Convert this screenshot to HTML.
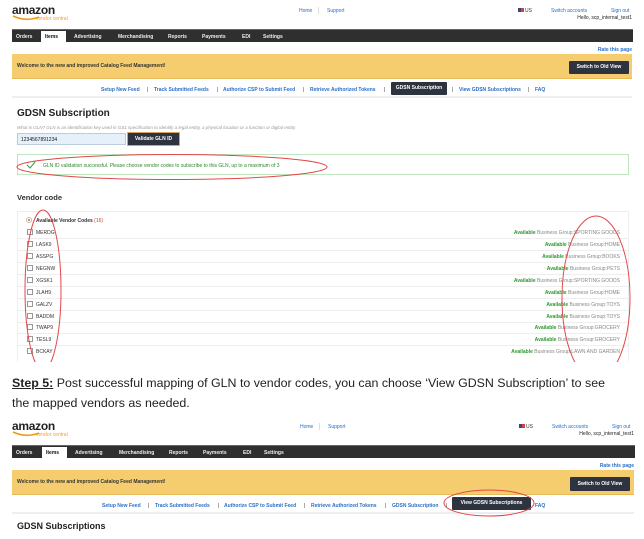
<!DOCTYPE html>
<html><head><meta charset="utf-8">
<style>
*{margin:0;padding:0;box-sizing:border-box}
body{width:644px;height:539px;background:#fff;position:relative;overflow:hidden;font-family:"Liberation Sans",sans-serif;color:#111}
.a{position:absolute;white-space:nowrap}
.hd{position:absolute;left:0;width:644px;height:120px}
.lnk{color:#2a6fc9;font-size:5px}
.nav{position:absolute;left:12px;top:29px;width:621px;height:13px;background:#2f2f2f;border-top:1px solid #666}
.nav span{position:absolute;top:4px;color:#eee;font-size:5px;font-weight:bold}
.tab{position:absolute;left:29px;top:1px;width:25px;height:12px;background:#fff}
.ban{position:absolute;left:12px;top:54px;width:620px;height:25px;background:#f6cd6e;border-bottom:1px solid #e6b95a}
.btn{position:absolute;background:#2d3440;color:#fff;font-size:5px;font-weight:bold;text-align:center;border-radius:1px}
.sub{position:absolute;top:87px;font-size:5px;font-weight:bold;color:#2a6fc9}
.bar{position:absolute;top:87px;font-size:5px;color:#333}
.row{position:absolute;left:17px;width:612px;height:12px;border-bottom:1px solid #eee;font-size:5px}
.cb{position:absolute;left:10px;top:2px;width:6px;height:6px;border:1px solid #999;background:#fff}
.code{position:absolute;left:19px;top:3px;color:#333}
.rt{position:absolute;right:9px;top:3px;color:#888}
.rt b{color:#2c9a2c}
</style></head><body>

<div class="hd" style="top:0">
 <div class="a" style="left:12px;top:3px;font-size:12px;font-weight:bold;color:#222;letter-spacing:-0.3px">amazon</div>
 <div class="a" style="left:36px;top:16px;font-size:5px;color:#f0a030">vendor central</div>
 <svg class="a" style="left:12px;top:15px" width="30" height="6"><path d="M1 1 Q14 7 27 2" stroke="#f09a1a" stroke-width="1.6" fill="none"/></svg>
 <div class="a lnk" style="left:299px;top:8px">Home</div>
 <div class="a" style="left:318px;top:7px;width:1px;height:7px;background:#ddd"></div>
 <div class="a lnk" style="left:327px;top:8px">Support</div>
 <div class="a" style="left:518px;top:8px;width:6px;height:4px;background:#c44;border-left:3px solid #447"></div>
 <div class="a" style="left:525px;top:8px;font-size:5px;color:#333">US</div>
 <div class="a lnk" style="left:551px;top:8px">Switch accounts</div>
 <div class="a lnk" style="left:611px;top:8px">Sign out</div>
 <div class="a" style="right:12px;top:15px;font-size:5px;color:#222">Hello, scp_internal_test1</div>
 <div class="nav">
  <div class="tab"></div>
  <span style="left:4px">Orders</span><span style="left:33px;color:#111">Items</span>
  <span style="left:62px">Advertising</span><span style="left:106px">Merchandising</span>
  <span style="left:156px">Reports</span><span style="left:190px">Payments</span>
  <span style="left:230px">EDI</span><span style="left:251px">Settings</span>
 </div>
 <div class="a lnk" style="right:12px;top:47px;font-weight:bold">Rate this page</div>
 <div class="ban">
  <div class="a" style="left:5px;top:9px;font-size:5px;font-weight:bold;color:#333">Welcome to the new and improved Catalog Feed Management!</div>
 </div>
 <div class="btn" style="left:569px;top:61px;width:60px;height:13px;line-height:13px">Switch to Old View</div>
 <div class="sub" style="left:101px">Setup New Feed</div><div class="bar" style="left:147px">|</div>
 <div class="sub" style="left:154px">Track Submitted Feeds</div><div class="bar" style="left:217px">|</div>
 <div class="sub" style="left:223px">Authorize CSP to Submit Feed</div><div class="bar" style="left:303px">|</div>
 <div class="sub" style="left:310px">Retrieve Authorized Tokens</div><div class="bar" style="left:384px">|</div>
 <div class="sub" style="left:395px">GDSN Subscription</div><div class="bar" style="left:452px">|</div>
 <div class="sub" style="left:459px">View GDSN Subscriptions</div><div class="bar" style="left:528px">|</div>
 <div class="sub" style="left:535px">FAQ</div>
 <div class="a" style="left:12px;top:96px;width:620px;height:2px;background:#eee"></div>
</div>
<div class="btn" style="left:391px;top:82px;width:56px;height:13px;line-height:13px;font-size:5px">GDSN Subscription</div>

<div class="a" style="left:17px;top:108px;font-size:10px;font-weight:bold;color:#222">GDSN Subscription</div>
<div class="a" style="left:17px;top:125px;font-size:4.5px;font-style:italic;color:#999">What is GLN? GLN is an identification key used in GS1 specification to identify a legal entity, a physical location or a function or digital entity.</div>
<div class="a" style="left:17px;top:133px;width:109px;height:12px;background:#e6f0fb;border:1px solid #bcd;font-size:5px;padding:3px 3px">1234567891234</div>
<div class="btn" style="left:127px;top:132px;width:53px;height:14px;line-height:13px;border:1px solid #d9a060">Validate GLN ID</div>

<div class="a" style="left:17px;top:154px;width:612px;height:21px;border:1px solid #bfe6bf"></div>
<svg class="a" style="left:26px;top:161px" width="10" height="8"><path d="M1 4 L4 7 L9 1" stroke="#3a9a3a" stroke-width="1" fill="none"/></svg>
<div class="a" style="left:43px;top:163px;font-size:5px;color:#2c8a2c">GLN ID validation successful. Please choose vendor codes to subscribe to this GLN, up to a maximum of 3</div>
<svg class="a" style="left:14px;top:152px" width="316" height="32"><ellipse cx="158" cy="15" rx="155" ry="12.5" stroke="#e04848" stroke-width="1" fill="none"/></svg>

<div class="a" style="left:17px;top:193px;font-size:7.5px;font-weight:bold;color:#333">Vendor code</div>
<div class="a" style="left:17px;top:211px;width:612px;height:150px;border:1px solid #eee;border-bottom:none"></div>
<div class="a" style="left:26px;top:217px;width:6px;height:6px;border-radius:50%;border:1px solid #bbb;background:radial-gradient(#f08030 35%,#fff 45%)"></div>
<div class="a" style="left:36px;top:218px;font-size:5px;font-weight:bold;color:#333">Available Vendor Codes <span style="color:#d04020;font-weight:normal">(16)</span></div>

<div class="row" style="top:227px"><div class="cb"></div><div class="code">MERDG</div><div class="rt"><b>Available</b> Business Group:SPORTING GOODS</div></div>
<div class="row" style="top:239px"><div class="cb"></div><div class="code">LASK9</div><div class="rt"><b>Available</b> Business Group:HOME</div></div>
<div class="row" style="top:251px"><div class="cb"></div><div class="code">ASSPG</div><div class="rt"><b>Available</b> Business Group:BOOKS</div></div>
<div class="row" style="top:263px"><div class="cb"></div><div class="code">NEGNW</div><div class="rt"><b>Available</b> Business Group:PETS</div></div>
<div class="row" style="top:275px"><div class="cb"></div><div class="code">XGSK1</div><div class="rt"><b>Available</b> Business Group:SPORTING GOODS</div></div>
<div class="row" style="top:287px"><div class="cb"></div><div class="code">JLAH9</div><div class="rt"><b>Available</b> Business Group:HOME</div></div>
<div class="row" style="top:299px"><div class="cb"></div><div class="code">GALZV</div><div class="rt"><b>Available</b> Business Group:TOYS</div></div>
<div class="row" style="top:311px"><div class="cb"></div><div class="code">BADDM</div><div class="rt"><b>Available</b> Business Group:TOYS</div></div>
<div class="row" style="top:322px"><div class="cb"></div><div class="code">TWAP9</div><div class="rt"><b>Available</b> Business Group:GROCERY</div></div>
<div class="row" style="top:334px"><div class="cb"></div><div class="code">TESL9</div><div class="rt"><b>Available</b> Business Group:GROCERY</div></div>
<div class="row" style="top:346px;border:none"><div class="cb"></div><div class="code">BCKAY</div><div class="rt"><b>Available</b> Business Group:LAWN AND GARDEN</div></div>

<svg class="a" style="left:0;top:0" width="644" height="362"><ellipse cx="43" cy="290" rx="18" ry="80" stroke="#e04848" stroke-width="1" fill="none"/><ellipse cx="596" cy="298" rx="34" ry="82" stroke="#e04848" stroke-width="1" fill="none"/></svg>

<div class="a" style="left:12px;top:373px;font-size:12.4px;line-height:20px;color:#222;white-space:normal;width:612px"><b style="text-decoration:underline">Step 5:</b> Post successful mapping of GLN to vendor codes, you can choose ‘View GDSN Subscription’ to see the mapped vendors as needed.</div>

<div class="hd" style="top:416px">
 <div class="a" style="left:12px;top:3px;font-size:12px;font-weight:bold;color:#222;letter-spacing:-0.3px">amazon</div>
 <div class="a" style="left:36px;top:16px;font-size:5px;color:#f0a030">vendor central</div>
 <svg class="a" style="left:12px;top:15px" width="30" height="6"><path d="M1 1 Q14 7 27 2" stroke="#f09a1a" stroke-width="1.6" fill="none"/></svg>
 <div class="a lnk" style="left:300px;top:8px">Home</div>
 <div class="a" style="left:319px;top:7px;width:1px;height:7px;background:#ddd"></div>
 <div class="a lnk" style="left:328px;top:8px">Support</div>
 <div class="a" style="left:519px;top:8px;width:6px;height:4px;background:#c44;border-left:3px solid #447"></div>
 <div class="a" style="left:526px;top:8px;font-size:5px;color:#333">US</div>
 <div class="a lnk" style="left:552px;top:8px">Switch accounts</div>
 <div class="a lnk" style="left:612px;top:8px">Sign out</div>
 <div class="a" style="right:10px;top:15px;font-size:5px;color:#222">Hello, scp_internal_test1</div>
 <div class="nav" style="width:623px">
  <div class="tab" style="left:30px"></div>
  <span style="left:4px">Orders</span><span style="left:34px;color:#111">Items</span>
  <span style="left:63px">Advertising</span><span style="left:107px">Merchandising</span>
  <span style="left:157px">Reports</span><span style="left:191px">Payments</span>
  <span style="left:231px">EDI</span><span style="left:252px">Settings</span>
 </div>
 <div class="a lnk" style="right:10px;top:47px;font-weight:bold">Rate this page</div>
 <div class="ban" style="width:622px"><div class="a" style="left:5px;top:9px;font-size:5px;font-weight:bold;color:#333">Welcome to the new and improved Catalog Feed Management!</div></div>
 <div class="btn" style="left:570px;top:61px;width:60px;height:14px;line-height:14px">Switch to Old View</div>
 <div class="sub" style="left:102px">Setup New Feed</div><div class="bar" style="left:148px">|</div>
 <div class="sub" style="left:155px">Track Submitted Feeds</div><div class="bar" style="left:218px">|</div>
 <div class="sub" style="left:224px">Authorize CSP to Submit Feed</div><div class="bar" style="left:304px">|</div>
 <div class="sub" style="left:311px">Retrieve Authorized Tokens</div><div class="bar" style="left:385px">|</div>
 <div class="sub" style="left:392px">GDSN Subscription</div><div class="bar" style="left:446px">|</div>
 <div class="sub" style="left:535px">FAQ</div>
 <div class="a" style="left:12px;top:96px;width:622px;height:2px;background:#eee"></div>
</div>
<div class="btn" style="left:452px;top:497px;width:79px;height:13px;line-height:13px">View GDSN Subscriptions</div>
<svg class="a" style="left:442px;top:488px" width="96" height="32"><ellipse cx="47" cy="15" rx="45" ry="13" stroke="#e04848" stroke-width="1" fill="none"/></svg>
<div class="a" style="left:17px;top:521px;font-size:9px;font-weight:bold;color:#222">GDSN Subscriptions</div>
</body></html>
